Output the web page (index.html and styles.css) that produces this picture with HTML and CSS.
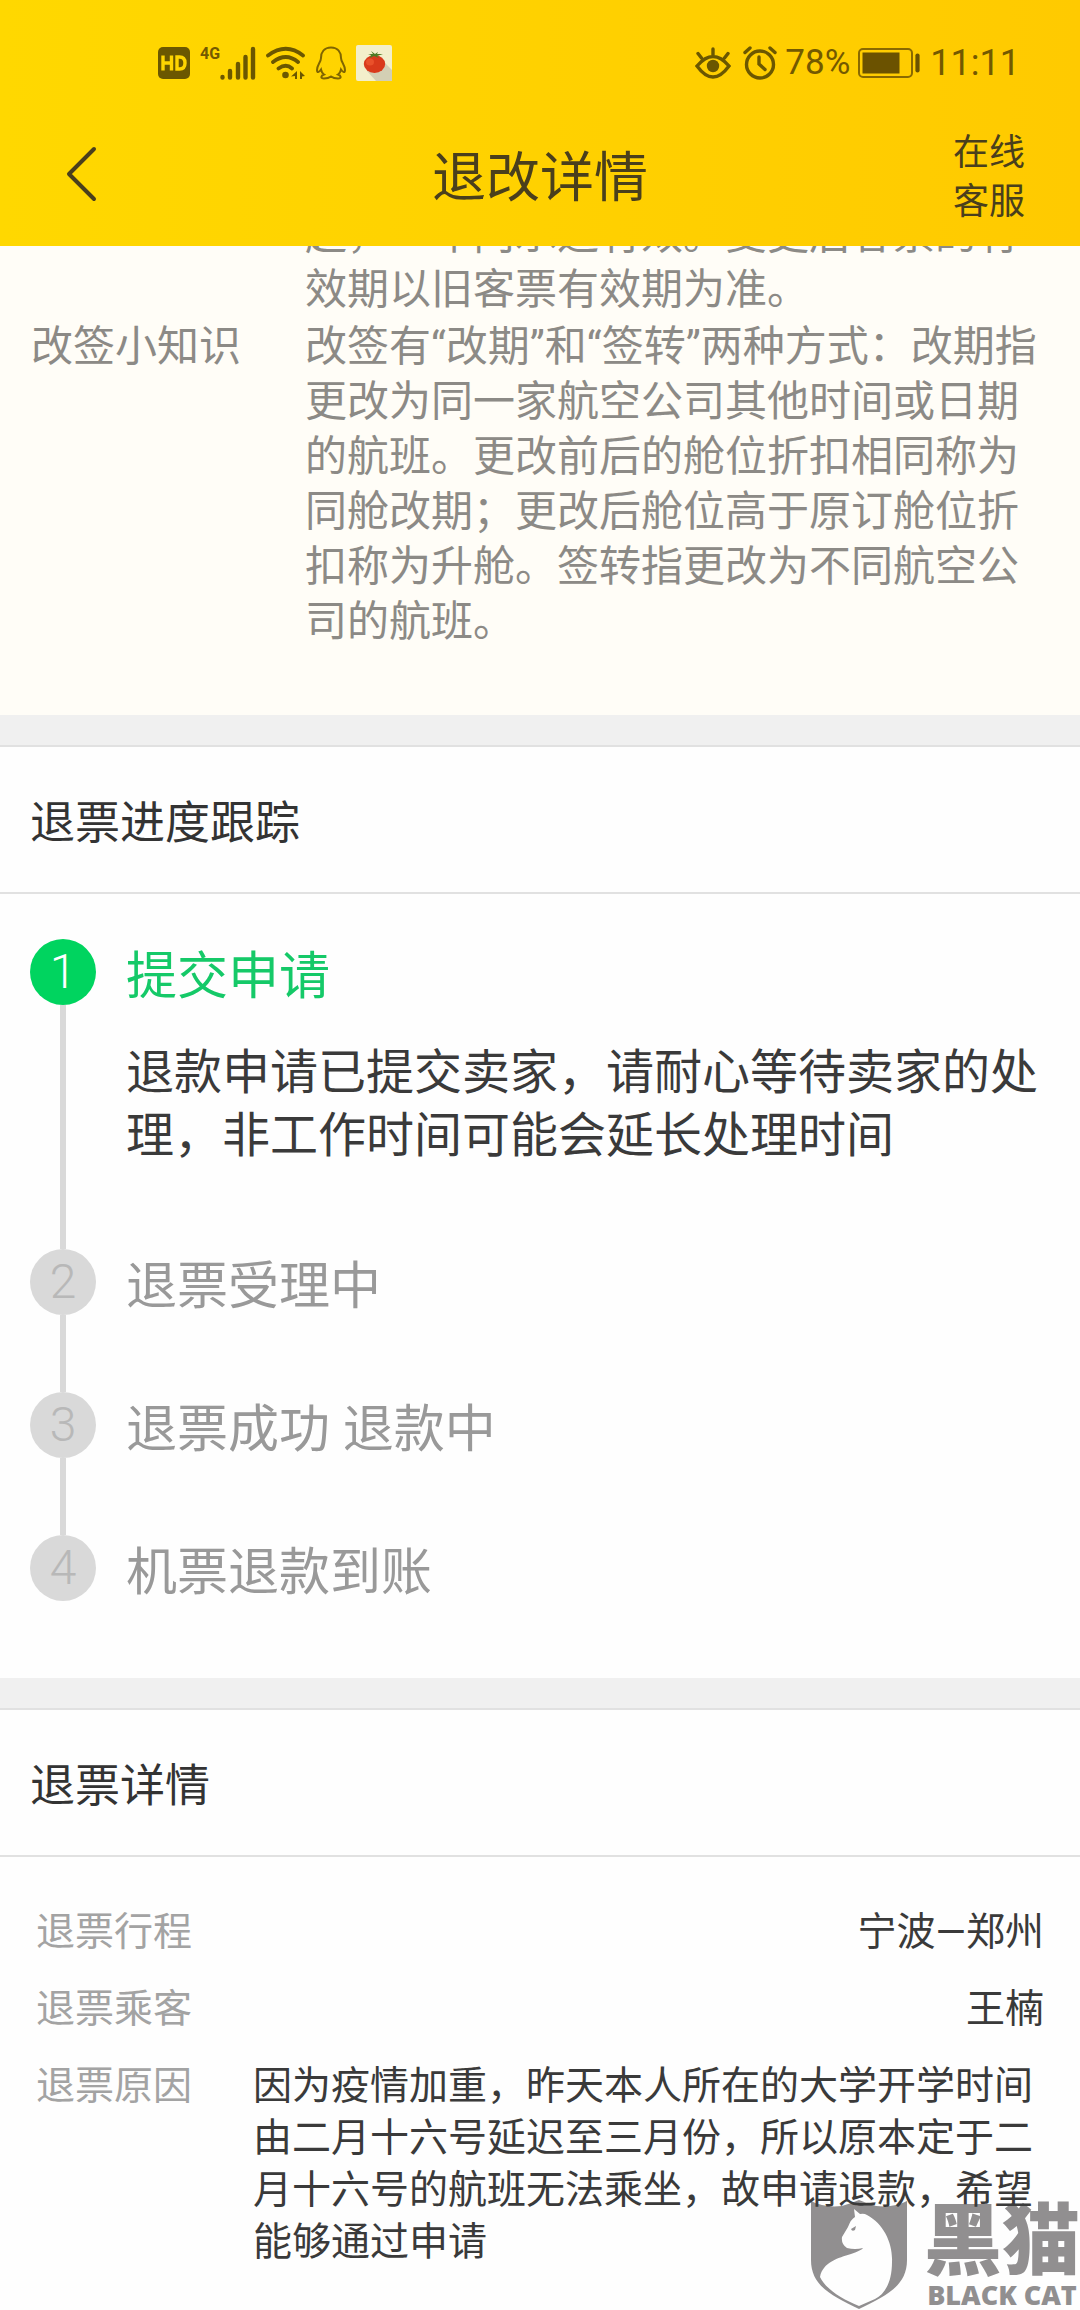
FILE: index.html
```html
<!DOCTYPE html>
<html lang="zh-CN">
<head>
<meta charset="utf-8">
<meta name="viewport" content="width=device-width">
<title>退改详情</title>
<link rel="stylesheet" href="styles.css">
</head>
<body>
<div class="page">
  <header class="top">
    <div class="status">
      <div class="status-left">
        <svg class="icon" width="32" height="32" viewBox="0 0 32 32" aria-hidden="true"><rect width="32" height="32" rx="5" fill="#6b5700"/><g stroke="#ffd500" stroke-width="3.4" fill="none"><path d="M5 8.500V23.500M13.500 8.500V23.500M5 16H13.500M19 10H21.500Q27 10 27 16T21.500 22H19Z"/></g></svg>
        <div class="signal"><span class="net">4G</span><svg class="icon" width="36" height="34" viewBox="0 0 36 34" aria-hidden="true"><g stroke="#6b5700" stroke-width="4.400" stroke-linecap="round"><path d="M2.500 31V31.500M10 25V31.500M18 18V31.500M25.500 11V31.500M33 3V31.500"/></g></svg></div>
        <svg class="icon" width="40" height="34" viewBox="0 0 40 34" aria-hidden="true"><g fill="none" stroke="#6b5700" stroke-width="3.800" stroke-linecap="round"><path d="M2 9.500Q20 -4 37 9.500M7 16Q20 6 32 16M12.500 22.500Q20 17 26 22.500"/></g><circle cx="19.500" cy="29" r="3.300" fill="#6b5700"/><path d="M31 25V33H29V30L25 30.500ZM34 25L39 30L36 30.500V33H34Z" fill="#6b5700"/></svg>
        <svg class="icon" width="30" height="34" viewBox="0 0 30 34" aria-hidden="true"><path d="M15 1.500C8 1.500 5 6.500 5 12C5 16 1 19 1 24C1 27 3 26.500 5 23.500C5.500 26 6.500 27.500 8 28.500C5 29.500 4 32.500 8 32.500C11 32.500 13 32 15 30.500C17 32 19 32.500 22 32.500C26 32.500 25 29.500 22 28.500C23.500 27.500 24.500 26 25 23.500C27 26.500 29 27 29 24C29 19 25 16 25 12C25 6.500 22 1.500 15 1.500Z" fill="none" stroke="#806500" stroke-width="2"/></svg>
        <svg class="icon" width="36" height="36" viewBox="0 0 36 36" aria-hidden="true"><rect width="36" height="36" rx="2" fill="#f3efcb"/><path d="M28 17L36 25V36H20L11 26Z" fill="#d3cfb4"/><ellipse cx="18.500" cy="19" rx="10.700" ry="9" fill="#d93a1b"/><ellipse cx="14" cy="17" rx="4" ry="3.500" fill="#e9512b"/><path d="M12 9L17 9L15 6L19 9L22 7L21 9L27 9L21 11L23 13L18 11L14 13L15 10Z" fill="#4d7b24"/></svg>
      </div>
      <div class="status-right">
        <svg class="icon eye" width="36" height="32" viewBox="0 0 36 32" aria-hidden="true"><g fill="none" stroke="#6b5700" stroke-width="3.400" stroke-linecap="round"><path d="M2 19Q18 0 34 19Q18 41 2 19ZM18 8V2M6.500 11L3 6.500M29.500 11L33 6.500"/></g><circle cx="18" cy="19" r="6.200" fill="#6b5700"/></svg>
        <svg class="icon" width="34" height="34" viewBox="0 0 34 34" aria-hidden="true"><g fill="none" stroke="#6b5700" stroke-width="3.400" stroke-linecap="round"><circle cx="17" cy="18.500" r="13.500"/><path d="M16 11V18L22 23.500M2 6.500L7 2M27 2L32 6.500"/></g></svg>
        <span class="percent">78%</span>
        <svg class="icon battery" width="62" height="30" viewBox="0 0 62 30" aria-hidden="true"><rect x="1" y="1" width="53" height="28" rx="4" fill="none" stroke="#8a6900" stroke-width="2"/><rect x="4.500" y="4.500" width="37" height="21" fill="#6b5200"/><path d="M59.500 7.500V22.500" stroke="#6b5200" stroke-width="4.200" stroke-linecap="round"/></svg>
        <time class="clock">11:11</time>
      </div>
    </div>
    <nav class="nav">
      <button class="back" type="button" aria-label="返回"><svg width="32" height="56" viewBox="0 0 32 56" aria-hidden="true"><path d="M29 3L4 28L29 53" fill="none" stroke="#4a3f1c" stroke-width="4" stroke-linecap="round" stroke-linejoin="round"/></svg></button>
      <h1 class="title">退改详情</h1>
      <a class="service" href="#service">在线<br>客服</a>
    </nav>
  </header>

  <main class="content">
    <dl class="notes">
      <dd class="note-text">起，一年内承运有效。变更后客票的有效期以旧客票有效期为准。</dd>
      <dt class="note-label">改签小知识</dt>
      <dd class="note-text">改签有“改期”和“签转”两种方式：改期指更改为同一家航空公司其他时间或日期的航班。更改前后的舱位折扣相同称为同舱改期；更改后舱位高于原订舱位折扣称为升舱。签转指更改为不同航空公司的航班。</dd>
    </dl>

    <section class="panel">
      <h2 class="panel-title">退票进度跟踪</h2>
      <ol class="steps">
        <li class="step step-active">
          <div class="track"><span class="dot">1</span></div>
          <div class="step-body">
            <h3 class="step-title">提交申请</h3>
            <p class="step-text">退款申请已提交卖家，请耐心等待卖家的处理，非工作时间可能会延长处理时间</p>
          </div>
        </li>
        <li class="step">
          <div class="track"><span class="dot">2</span></div>
          <div class="step-body"><h3 class="step-title">退票受理中</h3></div>
        </li>
        <li class="step">
          <div class="track"><span class="dot">3</span></div>
          <div class="step-body"><h3 class="step-title">退票成功 退款中</h3></div>
        </li>
        <li class="step">
          <div class="track"><span class="dot">4</span></div>
          <div class="step-body"><h3 class="step-title">机票退款到账</h3></div>
        </li>
      </ol>
    </section>

    <section class="panel">
      <h2 class="panel-title">退票详情</h2>
      <dl class="details">
        <div class="detail"><dt>退票行程</dt><dd>宁波—郑州</dd></div>
        <div class="detail"><dt>退票乘客</dt><dd>王楠</dd></div>
        <div class="detail detail-long"><dt>退票原因</dt><dd>因为疫情加重，昨天本人所在的大学开学时间由二月十六号延迟至三月份，所以原本定于二月十六号的航班无法乘坐，故申请退款，希望能够通过申请</dd></div>
      </dl>
    </section>
  </main>

  <div class="brand">
    <svg class="shield" width="98" height="110" viewBox="0 0 98 110" aria-hidden="true"><path d="M1 1Q14 8 32 6Q42 3 49 0Q56 3 66 6Q84 8 97 1V60C97 86 76 96 49 109C22 96 1 86 1 60Z" fill="#918f90"/><path d="M44 9L50 14Q54 13 57 15C74 24 83 44 82 62C82 82 75 94 65 99L49 106C30 98 16 89 10 77C13 62 28 58 41 54Q52 50 53 48Q45 50 37 48Q31 44 32 37L38 27Q41 19 45 17Z" fill="#fefefe"/><path d="M41 29L46 26L45 30Q42 32 41 29Z" fill="#918f90"/></svg>
    <div class="brand-name"><span class="brand-cn">黑猫</span><span class="brand-en">BLACK CAT</span></div>
  </div>
</div>
</body>
</html>
```
FILE: styles.css
```css
* {
  box-sizing: border-box;
}

body,
h1,
h2,
h3,
p,
dl,
dd,
ol {
  margin: 0;
  padding: 0;
  font-weight: 400;
}

body {
  background: #fefefe;
  color: #3a3a3a;
  font-family: Roboto, "Noto Sans CJK SC", sans-serif;
}

.page {
  position: relative;
  min-height: 100vh;
  overflow: hidden;
}

/* Header */
.top {
  position: relative;
  z-index: 2;
  background: linear-gradient(to right, #ffd800, #ffca00);
}

.status {
  display: flex;
  justify-content: space-between;
  align-items: center;
  height: 106px;
  padding: 20px 60px 0 158px;
  color: #735900;
}

.status-left,
.status-right {
  display: flex;
  align-items: center;
  gap: 10px;
}

.status-right {
  gap: 8px;
}

.icon {
  display: block;
  flex: none;
}

.eye {
  margin-right: 4px;
}

.battery {
  margin-right: 2px;
}

.signal {
  display: flex;
  align-items: flex-start;
}

.net {
  font-size: 16px;
  font-weight: 700;
  line-height: 16px;
}

.percent,
.clock {
  font-size: 36px;
  line-height: 40px;
}

.percent {
  font-size: 35px;
}

.nav {
  display: grid;
  grid-template-columns: 1fr auto 1fr;
  align-items: center;
  height: 140px;
  padding: 0 55px;
  color: #4a3f1c;
}

.back {
  justify-self: start;
  padding: 0 10px 4px;
  border: 0;
  background: none;
}

.back svg {
  display: block;
}

.title {
  padding-top: 6px;
  font-size: 54px;
  line-height: 80px;
}

.service {
  justify-self: end;
  padding-top: 4px;
  color: inherit;
  font-size: 36px;
  line-height: 49px;
  text-decoration: none;
}

/* Rebooking notes, scrolled partly under the header */
.notes {
  display: grid;
  grid-template-columns: 274px 1fr;
  row-gap: 2px;
  margin-top: -39px;
  padding: 0 31px 66px;
  background: #fffdf7;
  color: #8c8a86;
  font-size: 42px;
  line-height: 55px;
}

.note-text {
  grid-column: 2;
}

.note-label {
  grid-column: 1;
}

.note-label + .note-text {
  grid-row: 2;
}

/* Panels */
.panel {
  border-top: 30px solid #f0f0f0;
}

.panel-title {
  padding: 44px 30px 36px;
  border-top: 2px solid #e1e1e1;
  border-bottom: 2px solid #e1e1e1;
  color: #333;
  font-size: 45px;
  line-height: 65px;
}

/* Progress */
.steps {
  padding: 45px 30px 0;
  list-style: none;
}

.step {
  display: flex;
  gap: 30px;
  color: #999;
}

.track {
  display: flex;
  flex: none;
  flex-direction: column;
  align-items: center;
}

.track::after {
  flex: 1;
  width: 6px;
  background: #d9d9d9;
  content: "";
}

.step:last-child .track::after {
  content: none;
}

.dot {
  width: 66px;
  height: 66px;
  border-radius: 50%;
  background: #d9d9d9;
  color: #b8b8b8;
  font-size: 48px;
  font-weight: 300;
  line-height: 66px;
  text-align: center;
}

.step-active .dot {
  background: #00d45f;
  color: #fff;
}

.step-body {
  flex: 1;
  padding: 5px 0 72px;
}

.step-title {
  font-size: 51px;
  line-height: 66px;
}

.step-active .step-title {
  color: #15c968;
}

.step-text {
  margin: 31px 0 10px;
  color: #3a3a3a;
  font-size: 48px;
  line-height: 63px;
}

/* Refund details */
.details {
  display: flex;
  flex-direction: column;
  gap: 25px;
  position: relative;
  z-index: 1;
  padding: 49px 36px 36px;
  font-size: 39px;
  line-height: 52px;
}

.detail {
  display: flex;
  justify-content: space-between;
}

.detail dt {
  flex: none;
  width: 217px;
  color: #a3a3a3;
}

.detail-long dd {
  flex: 1;
}

/* Brand mark in the corner, behind the text */
.brand {
  position: absolute;
  right: 0;
  bottom: 0;
  display: flex;
  align-items: flex-end;
  gap: 16px;
  color: #918f90;
}

.shield {
  display: block;
}

.brand-name {
  display: flex;
  flex-direction: column;
  align-items: center;
}

.brand-cn {
  font-size: 78px;
  font-weight: 900;
  line-height: 74px;
}

.brand-en {
  font-family: "Open Sans", sans-serif;
  font-size: 27px;
  font-weight: 800;
  line-height: 30px;
}
```
